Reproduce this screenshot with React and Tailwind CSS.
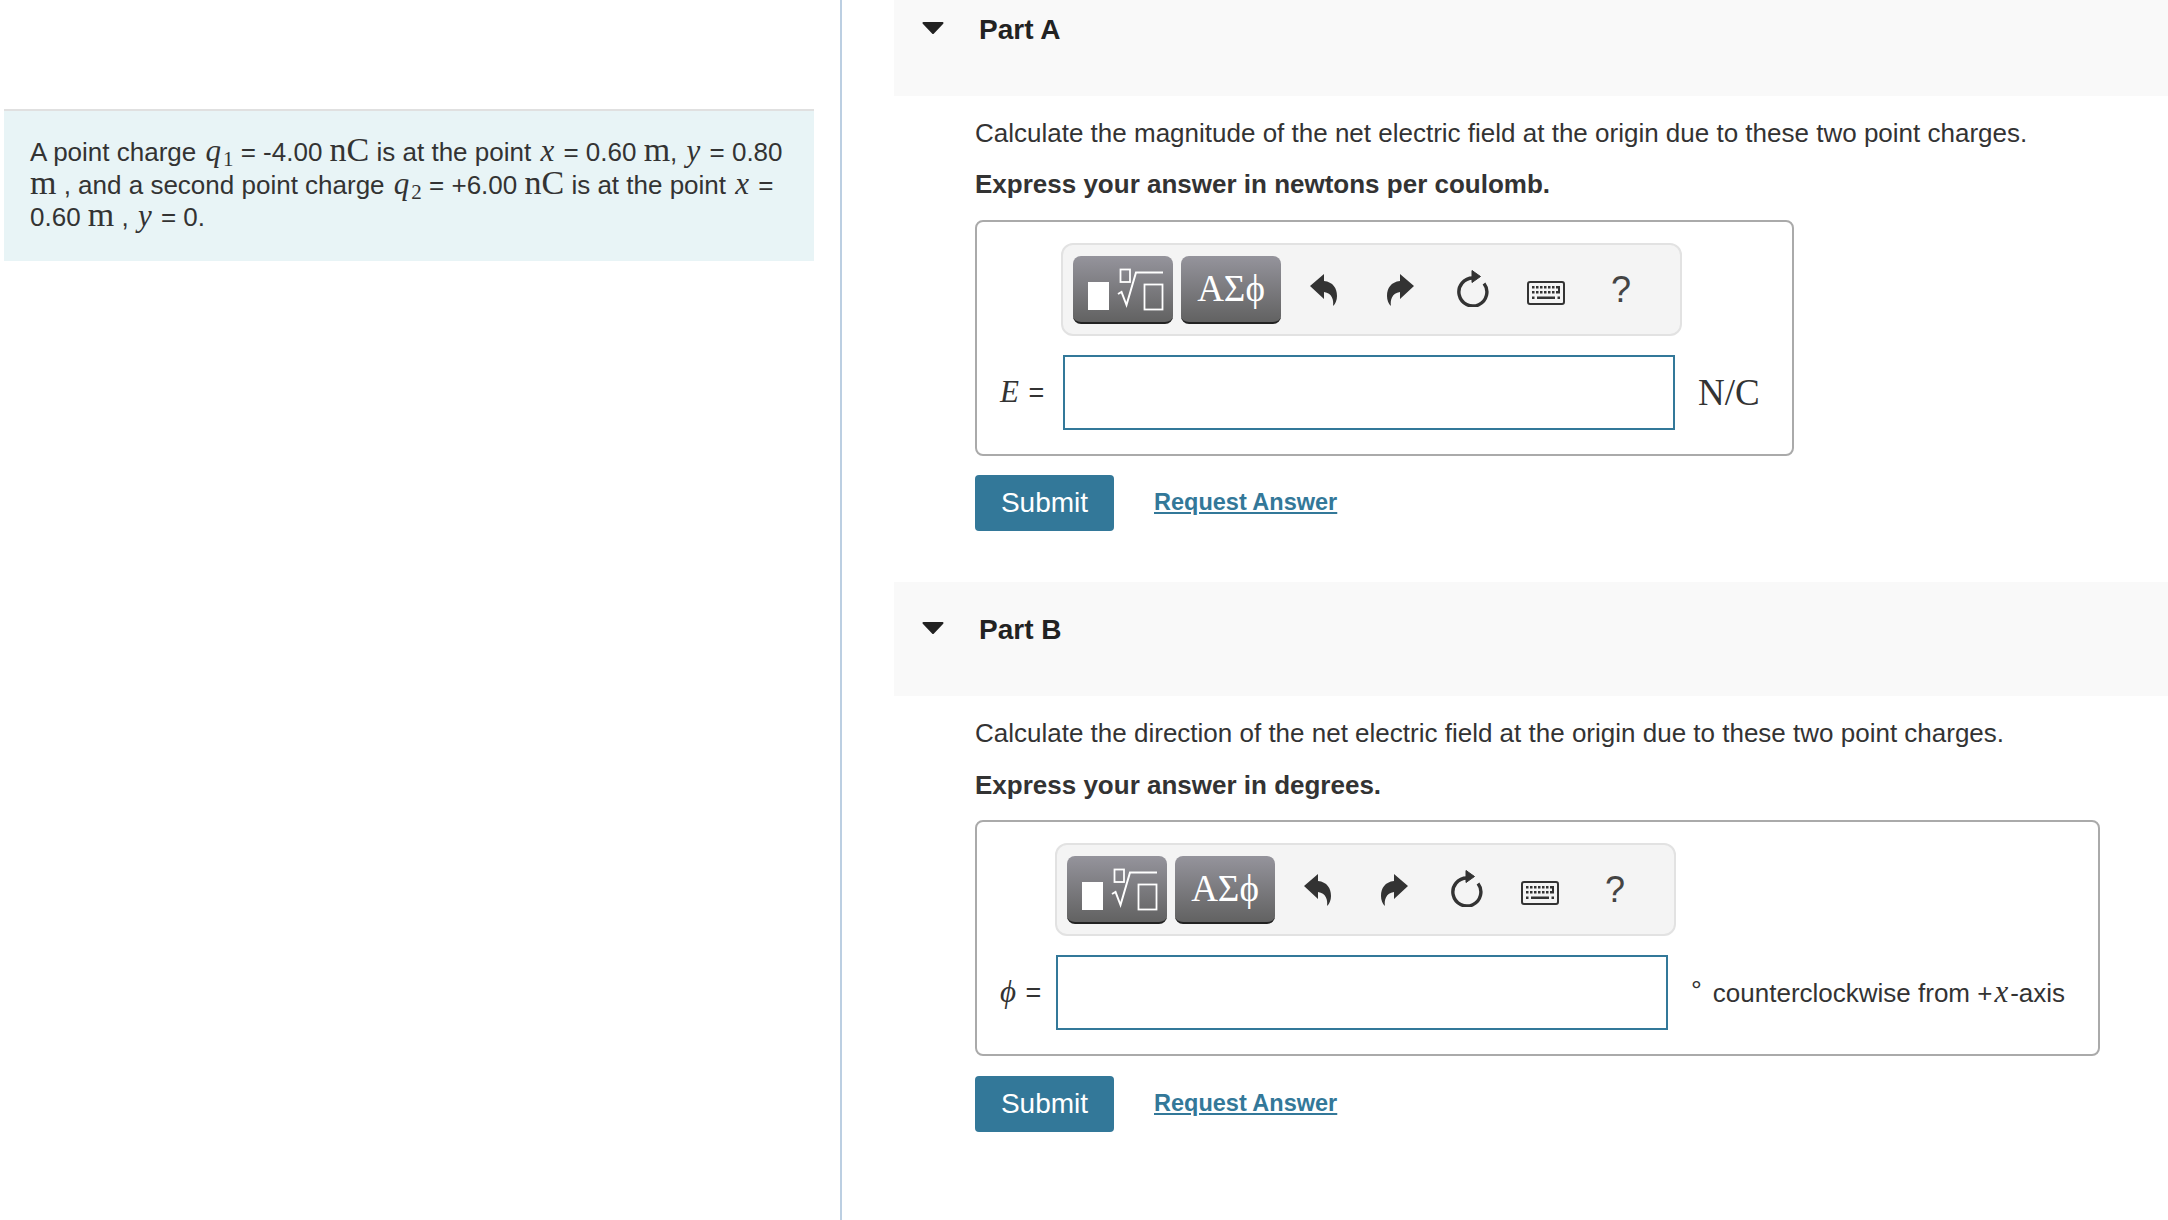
import React from "react";

const Serif = ({ children }) => <span className="font-['Liberation_Serif',serif] text-[34px] leading-[0]">{children}</span>;
const Var = ({ children }) => <span className="px-[2px] font-['Liberation_Serif',serif] text-[31px] italic leading-[0]">{children}</span>;
const Sub = ({ children }) => <sub className="font-['Liberation_Serif',serif] text-[21px] leading-[0]">{children}</sub>;

const Caret = () => (
    <svg width="22" height="12" viewBox="0 0 22 12" className="shrink-0">
        <path d="M1.5 1 H20.5 L11 11 Z" fill="#222" stroke="#222" strokeWidth="2" strokeLinejoin="round" />
    </svg>
);

const RootIcon = () => (
    <svg width="100" height="68" viewBox="0 0 100 68">
        <rect x="15" y="26" width="21" height="28" fill="#fff" />
        <rect x="47.5" y="13.5" width="9.5" height="12.5" fill="none" stroke="#fff" strokeWidth="1.8" />
        <path d="M45 38 L48.5 36 L53.5 49 L63 16.5 H90" fill="none" stroke="#fff" strokeWidth="2" />
        <rect x="71.5" y="28.5" width="18" height="25" fill="none" stroke="#fff" strokeWidth="1.8" />
    </svg>
);

const UndoIcon = ({ flip }) => (
    <svg width="27" height="32" viewBox="0 0 27 32" className={flip ? "-scale-x-100" : ""}>
        <path d="M0 12 L14 0 V7 C23 8 27 14 27 22 C27 26 25.500 30 23 32 C24 26 22 19 14 18 V25 Z" fill="#333" />
    </svg>
);

const RefreshIcon = () => (
    <svg width="33" height="37" viewBox="0 0 33 37">
        <path d="M16 8 A14 14 0 1 0 27 13.500" fill="none" stroke="#333" strokeWidth="3.400" />
        <path d="M15 0.500 L23.500 6.500 L15 12.500 Z" fill="#333" stroke="#333" strokeWidth="1" strokeLinejoin="round" />
    </svg>
);

const KeyboardIcon = () => (
    <svg width="38" height="24" viewBox="0 0 38 24">
        <rect x="1" y="1" width="36" height="22" rx="2" fill="#f4f4f4" stroke="#333" strokeWidth="2" />
        {[5, 9, 13, 17, 21, 25, 29].map((x) => (
            <rect key={x} x={x} y="5" width="2.500" height="2.500" fill="#333" />
        ))}
        {[5, 9, 13, 17, 21, 25].map((x) => (
            <rect key={x} x={x} y="10" width="2.500" height="2.500" fill="#333" />
        ))}
        <path d="M31 5 H33 V12.500 H29 V10 H31 Z" fill="#333" />
        <rect x="5" y="15.500" width="2.500" height="2.500" fill="#333" />
        <rect x="10" y="15.500" width="18" height="2.500" fill="#333" />
        <rect x="30.500" y="15.500" width="2.500" height="2.500" fill="#333" />
    </svg>
);

const Toolbar = () => (
    <div className="flex h-[93px] w-[621px] items-center rounded-xl border-2 border-[#e2e2e2] bg-[#f4f4f4] pl-[10px]">
        <div className="h-[68px] w-[100px] rounded-lg border-b-2 border-[#222] bg-gradient-to-b from-[#95949c] to-[#626262]">
            <RootIcon />
        </div>
        <div className="ml-[8px] flex h-[68px] w-[100px] items-center justify-center rounded-lg border-b-2 border-[#222] bg-gradient-to-b from-[#95949c] to-[#626262] font-['Liberation_Serif',serif] text-[37px] text-white">
            ΑΣϕ
        </div>
        <div className="ml-[29px]"><UndoIcon /></div>
        <div className="ml-[50px]"><UndoIcon flip /></div>
        <div className="mb-[2px] ml-[43px]"><RefreshIcon /></div>
        <div className="ml-[37px] mt-[6px]"><KeyboardIcon /></div>
        <div className="ml-[46px] text-[36px] leading-none text-[#444]">?</div>
    </div>
);

const AnswerBox = ({ width, indent, labelWidth, label, children }) => (
    <div className={`${width} ml-[81px] h-[236px] rounded-lg border-2 border-[#aaa] pt-[21px]`}>
        <div className={indent}>
            <Toolbar />
        </div>
        <div className="mt-[19px] flex items-center">
            <div className={`${labelWidth} pl-[21px] pt-[2px] text-[27px] text-[#333]`}>{label}</div>
            <div className="h-[75px] w-[612px] border-2 border-[#337899] bg-white" />
            {children}
        </div>
    </div>
);

const Actions = ({ margin }) => (
    <div className={`${margin} ml-[81px] flex items-center`}>
        <button className="h-[56px] w-[139px] rounded-sm bg-[#337899] text-[28px] text-white">Submit</button>
        <a href="#" className="ml-[40px] text-[23.500px] font-bold text-[#337899] underline">Request Answer</a>
    </div>
);

const App = () => {
    return (
        <div className="flex h-[1220px] overflow-hidden bg-white font-['Liberation_Sans',sans-serif] text-[26px] text-[#333]">
            {/* Left: problem statement */}
            <div className="h-full w-[842px] shrink-0 border-r-2 border-[#bccfe2] pl-[4px] pt-[109px]">
                <div className="h-[152px] w-[810px] border-t-2 border-[#e0e0e0] bg-[#e8f4f6] pl-[26px] pt-[25px] leading-[32.500px]">
                    A point charge <Var>q</Var><Sub>1</Sub> = -4.00 <Serif>nC</Serif> is at the point <Var>x</Var> = 0.60 <Serif>m</Serif>, <Var>y</Var> = 0.80
                    <br />
                    <Serif>m</Serif> , and a second point charge <Var>q</Var><Sub>2</Sub> = +6.00 <Serif>nC</Serif> is at the point <Var>x</Var> =
                    <br />
                    0.60 <Serif>m</Serif> , <Var>y</Var> = 0.
                </div>
            </div>

            {/* Right: parts */}
            <div className="flex-1 pl-[52px]">
                <div className="flex h-[96px] items-start bg-[#f9f9f9] pl-[28px] pt-[13px]">
                    <div className="mt-[9px]"><Caret /></div>
                    <div className="ml-[35px] text-[28px] font-bold leading-[34px] text-[#222]">Part A</div>
                </div>
                <p className="ml-[81px] mt-[19px] leading-[36px]">Calculate the magnitude of the net electric field at the origin due to these two point charges.</p>
                <p className="ml-[81px] mt-[15px] font-bold leading-[36px]">Express your answer in newtons per coulomb.</p>
                <div className="mt-[18px]">
                    <AnswerBox width="w-[819px]" indent="ml-[84px]" labelWidth="w-[86px]" label={<><Var>E</Var> =</>}>
                        <span className="ml-[23px] font-['Liberation_Serif',serif] text-[37px]">N/C</span>
                    </AnswerBox>
                </div>
                <Actions margin="mt-[19px]" />

                <div className="mt-[51px] flex h-[114px] items-start bg-[#f9f9f9] pl-[28px] pt-[31px]">
                    <div className="mt-[9px]"><Caret /></div>
                    <div className="ml-[35px] text-[28px] font-bold leading-[34px] text-[#222]">Part B</div>
                </div>
                <p className="ml-[81px] mt-[19px] leading-[36px]">Calculate the direction of the net electric field at the origin due to these two point charges.</p>
                <p className="ml-[81px] mt-[16px] font-bold leading-[36px]">Express your answer in degrees.</p>
                <div className="mt-[17px]">
                    <AnswerBox width="w-[1125px]" indent="ml-[78px]" labelWidth="w-[79px]" label={<><Var>ϕ</Var> =</>}>
                        <span className="mb-[3px] ml-[23px] text-[27px]">°</span>
                        <span className="ml-[11px] mt-[2px]">counterclockwise from +<Var>x</Var>-axis</span>
                    </AnswerBox>
                </div>
                <Actions margin="mt-[20px]" />
            </div>
        </div>
    );
};

export default App;
